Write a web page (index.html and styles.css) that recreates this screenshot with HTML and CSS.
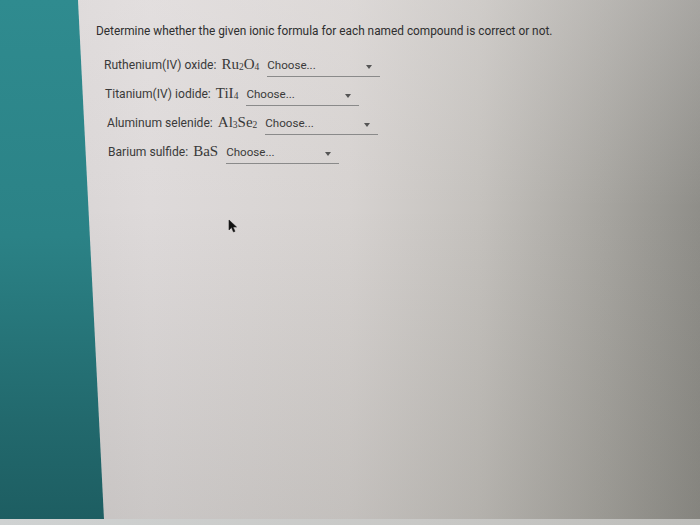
FILE: index.html
```html
<!DOCTYPE html>
<html>
<head>
<meta charset="utf-8">
<link rel="stylesheet" href="styles.css">
</head>
<body>
<div class="screen">
  <div class="panel">
    <p class="title">Determine whether the given ionic formula for each named compound is correct or not.</p>
    <div class="rows">
      <div class="row r1">
        <span class="label">Ruthenium(IV) oxide:</span>
        <span class="formula">Ru<sub>2</sub>O<sub>4</sub></span>
        <span class="select">Choose...<i class="caret"></i></span>
      </div>
      <div class="row r2">
        <span class="label">Titanium(IV) iodide:</span>
        <span class="formula">TiI<sub>4</sub></span>
        <span class="select">Choose...<i class="caret"></i></span>
      </div>
      <div class="row r3">
        <span class="label">Aluminum selenide:</span>
        <span class="formula">Al<sub>3</sub>Se<sub>2</sub></span>
        <span class="select">Choose...<i class="caret"></i></span>
      </div>
      <div class="row r4">
        <span class="label">Barium sulfide:</span>
        <span class="formula">BaS</span>
        <span class="select">Choose...<i class="caret"></i></span>
      </div>
    </div>
    <svg class="cursor" width="10" height="14" viewBox="0 0 10 14">
      <path d="M1 1 L1 11 L3.5 8.5 L5.5 13 L7 12.3 L5 8 L8.5 8 Z" fill="#111" stroke="#222" stroke-width="0.6"/>
    </svg>
  </div>
  <div class="bottom"></div>
</div>
</body>
</html>
```

FILE: styles.css
```css
html, body {
  margin: 0;
  padding: 0;
}
body {
  width: 700px;
  height: 525px;
  overflow: hidden;
  font-family: Roboto, "Liberation Sans", Arial, sans-serif;
}
.screen {
  width: 700px;
  height: 525px;
  display: flex;
  flex-direction: column;
  background: linear-gradient(to bottom, #2f8b8f 0%, #2b8286 45%, #22696d 80%, #1d5d61 100%);
}
.panel {
  position: relative;
  flex: 1;
  clip-path: polygon(78px 0, 100% 0, 100% 100%, 104px 100%);
  background:
    linear-gradient(to bottom, rgba(240,236,236,0.25) 0%, rgba(0,0,0,0) 40%, rgba(60,60,50,0.12) 100%),
    linear-gradient(to right, #d6d2d2 0px, #dedada 150px, #d6d2d0 350px, #c4c1bd 480px, #a8a6a1 600px, #8f8e89 700px);
  padding: 24px 0 0 96px;
  box-sizing: border-box;
}
.title {
  margin: 0;
  font-size: 11.85px;
  line-height: 15px;
  color: #2f2f2f;
}
.rows {
  margin-top: 17px;
  padding-left: 8px;
  display: flex;
  flex-direction: column;
}
.row {
  display: flex;
  align-items: baseline;
  height: 29px;
  color: #3a3a3a;
  font-size: 12.1px;
}
.r2 { margin-left: 1px; }
.r3 { margin-left: 3px; }
.r4 { margin-left: 4px; }
.label {
  white-space: nowrap;
}
.formula {
  font-family: "Liberation Serif", "Times New Roman", serif;
  font-size: 15px;
  margin-left: 5px;
  color: #383838;
}
.formula sub {
  font-size: 9.5px;
  vertical-align: -1px;
}
.select {
  position: relative;
  margin-left: 8px;
  width: 113px;
  padding-bottom: 4px;
  border-bottom: 1px solid #8a8a8a;
  color: #3a3a3a;
  font-size: 11.6px;
}
.caret {
  position: absolute;
  right: 8px;
  top: 7px;
  width: 0;
  height: 0;
  border-left: 3.5px solid transparent;
  border-right: 3.5px solid transparent;
  border-top: 4px solid #555;
}
.cursor {
  position: absolute;
  left: 228px;
  top: 219px;
}
.bottom {
  height: 6px;
  background: linear-gradient(to right, #cfd2d2, #c8c8c6 60%, #bdbdba);
}
```
